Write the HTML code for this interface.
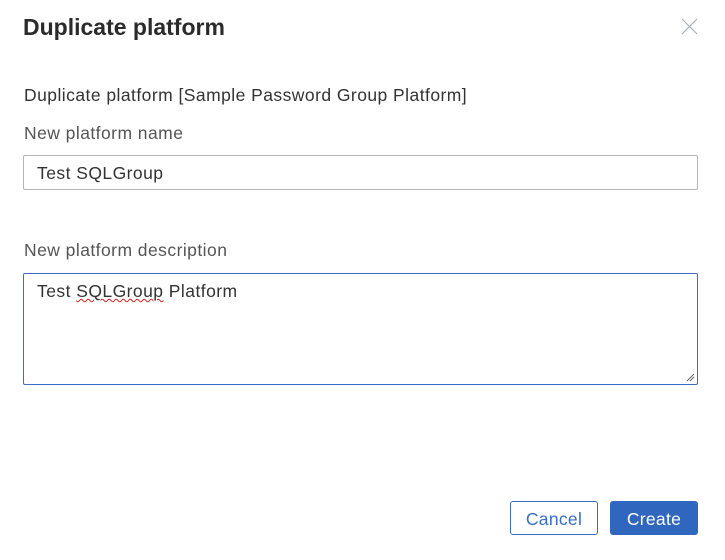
<!DOCTYPE html>
<html><head><style>
body{margin:0;width:725px;height:560px;background:#fff;font-family:"Liberation Sans",sans-serif;position:relative;overflow:hidden}
.a{position:absolute;white-space:nowrap}
.t{font-size:17.5px;letter-spacing:0.45px}
</style></head><body>
<div class="a" style="left:23px;top:14px;font-size:23px;font-weight:bold;color:#2b2b2b">Duplicate platform</div>
<svg class="a" style="left:681px;top:18px" width="17" height="17"><path d="M1 1L16 16M16 1L1 16" stroke="#a8b0b8" stroke-width="1.2"/></svg>
<div class="a t" style="left:24px;top:85px;color:#333">Duplicate platform [Sample Password Group Platform]</div>
<div class="a t" style="left:24px;top:123px;color:#555">New platform name</div>
<div class="a" style="left:23px;top:155px;width:673px;height:33px;border:1px solid #b5b5b5;border-radius:2px"></div>
<div class="a t" style="left:37px;top:163px;color:#333">Test SQLGroup</div>
<div class="a t" style="left:24px;top:240px;color:#555">New platform description</div>
<div class="a" style="left:23px;top:273px;width:673px;height:110px;border:1px solid #3a6dc0;border-radius:2px"></div>
<div class="a t" style="left:37px;top:281px;color:#333">Test <span style="text-decoration:underline wavy #d02020;text-decoration-thickness:1px">SQLGroup</span> Platform</div>
<svg class="a" style="left:686px;top:373px" width="9" height="9"><path d="M1 8L8 1M4 8L8 4" stroke="#666" stroke-width="1"/></svg>
<div class="a t" style="left:510px;top:501px;width:86px;height:32px;border:1px solid #3a6dc0;border-radius:3px;color:#3a6dc0;text-align:center;line-height:34px;letter-spacing:0.3px">Cancel</div>
<div class="a t" style="left:610px;top:501px;width:88px;height:34px;background:#3066be;border-radius:3px;color:#fff;text-align:center;line-height:36px;letter-spacing:0.3px">Create</div>
</body></html>
